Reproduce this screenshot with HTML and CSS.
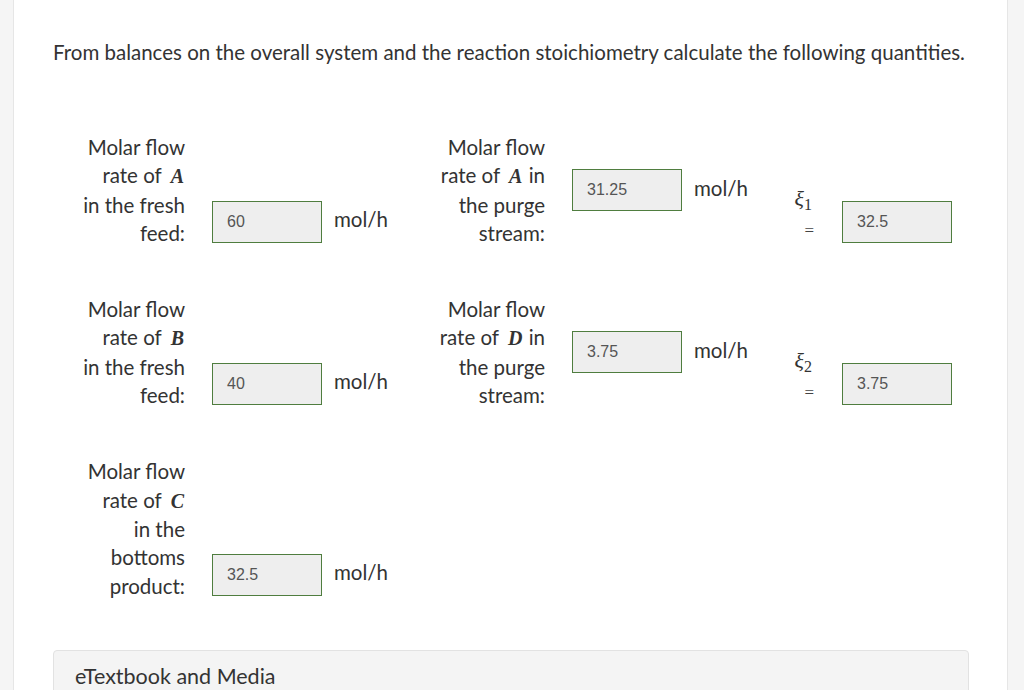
FILE: index.html
```html
<!DOCTYPE html>
<html>
<head>
<meta charset="utf-8">
<link rel="stylesheet" href="styles.css">
</head>
<body>
<div class="page">
  <p class="intro">From balances on the overall system and the reaction stoichiometry calculate the following quantities.</p>

  <div class="qrow">
    <div class="field f1">
      <div class="label">Molar flow rate of <i class="m">A</i> in the fresh feed:</div>
      <div class="box">60</div>
      <div class="unit">mol/h</div>
    </div>
    <div class="field f2">
      <div class="label">Molar flow rate of <i class="m">A</i> in the purge stream:</div>
      <div class="box">31.25</div>
      <div class="unit">mol/h</div>
    </div>
    <div class="field f3">
      <div class="xlabel"><span class="xi">ξ<sub>1</sub></span><span class="eq">=</span></div>
      <div class="box">32.5</div>
    </div>
  </div>

  <div class="qrow">
    <div class="field f1">
      <div class="label">Molar flow rate of <i class="m">B</i> in the fresh feed:</div>
      <div class="box">40</div>
      <div class="unit">mol/h</div>
    </div>
    <div class="field f2">
      <div class="label">Molar flow rate of <i class="m">D</i> in the purge stream:</div>
      <div class="box">3.75</div>
      <div class="unit">mol/h</div>
    </div>
    <div class="field f3">
      <div class="xlabel"><span class="xi">ξ<sub>2</sub></span><span class="eq">=</span></div>
      <div class="box">3.75</div>
    </div>
  </div>

  <div class="qrow">
    <div class="field f1">
      <div class="label">Molar flow rate of <i class="m">C</i> in the bottoms product:</div>
      <div class="box">32.5</div>
      <div class="unit">mol/h</div>
    </div>
  </div>

  <div class="media">eTextbook and Media</div>
</div>
</body>
</html>
```
FILE: styles.css
```css
html, body {
  margin: 0;
  padding: 0;
  height: 100%;
  overflow: hidden;
}
body {
  background: #f5f5f5;
  font-family: Lato, "Liberation Sans", sans-serif;
  color: #333333;
}
.page {
  margin-left: 13px;
  width: 995px;
  min-height: 100%;
  background: #ffffff;
  border-left: 1px solid #e6e6e6;
  border-right: 1px solid #e6e6e6;
  padding: 38px 0 0 39px;
  box-sizing: border-box;
}
.intro {
  margin: 0;
  font-size: 20.5px;
  line-height: 28px;
}
.qrow {
  display: flex;
  margin-top: 67px;
}
.qrow + .qrow {
  margin-top: 48px;
}
.field {
  display: flex;
}
.f1 {
  align-items: flex-end;
  margin-left: 29px;
  width: 357px;
}
.f2 {
  align-items: center;
  width: 351px;
}
.f3 {
  align-items: flex-end;
}
.label {
  width: 103px;
  text-align: right;
  font-size: 20.5px;
  line-height: 28.3px;
}
.f2 .label {
  width: 106px;
}
.m {
  font-family: "Liberation Serif", serif;
  font-size: 20px;
  font-weight: bold;
  font-style: italic;
  margin: 0 1px 0 4px;
}
.box {
  box-sizing: border-box;
  width: 110px;
  height: 42px;
  margin-left: 27px;
  background: #eeeeee;
  border: 1px solid #4f7d3f;
  font-family: "Liberation Sans", Arial, sans-serif;
  font-size: 16px;
  color: #555555;
  padding-left: 14px;
  display: flex;
  align-items: center;
}
.f1 .box, .f3 .box {
  margin-bottom: 4px;
}
.unit {
  margin-left: 12px;
  font-size: 20.5px;
  line-height: 28px;
}
.f1 .unit {
  margin-bottom: 14px;
}
.f2 .unit {
  margin-bottom: 4px;
}
.xlabel {
  width: 24px;
  display: flex;
  flex-direction: column;
  align-items: flex-end;
  font-family: "Liberation Serif", serif;
  margin-bottom: 4px;
}
.f3 .box {
  margin-left: 28px;
}
.xi {
  font-style: italic;
  font-size: 22px;
  line-height: 28px;
  padding-right: 2px;
}
.xi sub {
  font-style: normal;
  font-size: 16px;
  vertical-align: -4px;
}
.eq {
  font-size: 17px;
  line-height: 24px;
  color: #444;
}
.media {
  margin-top: 50px;
  width: 916px;
  box-sizing: border-box;
  background: #f4f4f4;
  border: 1px solid #e2e2e2;
  border-radius: 4px;
  padding: 11px 21px 20px;
  font-size: 21.5px;
  line-height: 28px;
}
```
